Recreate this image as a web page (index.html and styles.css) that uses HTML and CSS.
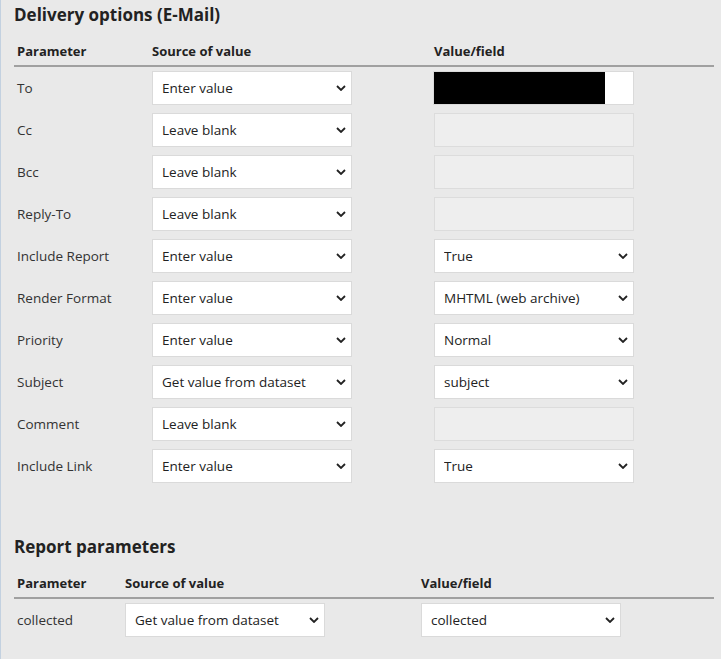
FILE: index.html
```html
<!DOCTYPE html>
<html lang="en">
<head>
  <meta charset="UTF-8">
  <title>Subscription - Delivery options</title>
  <link rel="stylesheet" href="styles.css">
</head>
<body>
<div class="page">

  <!-- Delivery options -->
  <section class="block">
    <h2 class="block-title">Delivery options (E-Mail)</h2>
    <table class="param-table">
      <colgroup>
        <col class="d-name"><col class="d-source"><col class="d-value">
      </colgroup>
      <thead>
        <tr><th>Parameter</th><th>Source of value</th><th>Value/field</th></tr>
      </thead>
      <tbody>
        <tr>
          <td>To</td>
          <td><select class="field"><option>Enter value</option><option>Leave blank</option><option>Get value from dataset</option></select></td>
          <td><div class="field masked"><span class="redact"></span></div></td>
        </tr>
        <tr>
          <td>Cc</td>
          <td><select class="field"><option>Leave blank</option><option>Enter value</option></select></td>
          <td><input class="field" type="text" disabled></td>
        </tr>
        <tr>
          <td>Bcc</td>
          <td><select class="field"><option>Leave blank</option><option>Enter value</option></select></td>
          <td><input class="field" type="text" disabled></td>
        </tr>
        <tr>
          <td>Reply-To</td>
          <td><select class="field"><option>Leave blank</option><option>Enter value</option></select></td>
          <td><input class="field" type="text" disabled></td>
        </tr>
        <tr>
          <td>Include Report</td>
          <td><select class="field"><option>Enter value</option><option>Leave blank</option></select></td>
          <td><select class="field"><option>True</option><option>False</option></select></td>
        </tr>
        <tr>
          <td>Render Format</td>
          <td><select class="field"><option>Enter value</option><option>Leave blank</option></select></td>
          <td><select class="field"><option>MHTML (web archive)</option><option>PDF</option><option>Excel</option></select></td>
        </tr>
        <tr>
          <td>Priority</td>
          <td><select class="field"><option>Enter value</option><option>Leave blank</option></select></td>
          <td><select class="field"><option>Normal</option><option>High</option><option>Low</option></select></td>
        </tr>
        <tr>
          <td>Subject</td>
          <td><select class="field"><option>Get value from dataset</option><option>Enter value</option></select></td>
          <td><select class="field"><option>subject</option><option>collected</option></select></td>
        </tr>
        <tr>
          <td>Comment</td>
          <td><select class="field"><option>Leave blank</option><option>Enter value</option></select></td>
          <td><input class="field" type="text" disabled></td>
        </tr>
        <tr>
          <td>Include Link</td>
          <td><select class="field"><option>Enter value</option><option>Leave blank</option></select></td>
          <td><select class="field"><option>True</option><option>False</option></select></td>
        </tr>
      </tbody>
    </table>
  </section>

  <!-- Report parameters -->
  <section class="block">
    <h2 class="block-title">Report parameters</h2>
    <table class="param-table">
      <colgroup>
        <col class="r-name"><col class="r-source"><col class="r-value">
      </colgroup>
      <thead>
        <tr><th>Parameter</th><th>Source of value</th><th>Value/field</th></tr>
      </thead>
      <tbody>
        <tr>
          <td>collected</td>
          <td><select class="field"><option>Get value from dataset</option><option>Enter value</option></select></td>
          <td><select class="field"><option>collected</option><option>subject</option></select></td>
        </tr>
      </tbody>
    </table>
  </section>

</div>
</body>
</html>
```

FILE: styles.css
```css
html, body {
  margin: 0;
  height: 100%;
}
body {
  background-color: #e9e9e9;
  font-family: "Open Sans", "Noto Sans", Arial, sans-serif;
  color: #262626;
}
.page {
  min-height: 100%;
  box-sizing: border-box;
  border-left: 1px solid #c3d1e0;
  padding: 3px 8px 0 13px;
}
.block + .block {
  margin-top: 48px;
}
.block-title {
  margin: 0;
  font-size: 17px;
  line-height: 24px;
  font-weight: bold;
  color: #222;
}
.param-table {
  width: 700px;
  table-layout: fixed;
  border-collapse: collapse;
  margin-top: 10px;
}
.d-name { width: 135px; }
.d-source { width: 282px; }
.d-value { width: 283px; }
.r-name { width: 108px; }
.r-source { width: 296px; }
.r-value { width: 296px; }

.param-table th {
  text-align: left;
  font-size: 13px;
  line-height: 16px;
  padding: 6px 3px;
  border-bottom: 2px solid #a0a0a0;
  color: #222;
}
.param-table td {
  padding: 4px 3px;
  font-size: 13.5px;
  vertical-align: middle;
  color: #333;
}
.field {
  display: block;
  box-sizing: border-box;
  width: 200px;
  height: 34px;
  margin: 0;
  border: 1px solid #dadada;
  border-radius: 0;
  background-color: #fff;
  font-family: inherit;
  font-size: 13.5px;
  color: #222;
  padding: 0 24px 0 9px;
  outline: none;
}
select.field {
  appearance: none;
  -webkit-appearance: none;
  background-image: url("data:image/svg+xml,%3Csvg xmlns='http://www.w3.org/2000/svg' width='10' height='6' viewBox='0 0 10 6'%3E%3Cpath d='M1 1l4 4 4-4' fill='none' stroke='%23222' stroke-width='1.8'/%3E%3C/svg%3E");
  background-repeat: no-repeat;
  background-position: right 5px center;
}
input.field:disabled {
  background-color: #eeeeee;
  border-color: #dcdcdc;
}
.masked {
  display: flex;
  width: 201px;
  margin-left: -1px;
  padding: 0;
  overflow: hidden;
}
.redact {
  display: block;
  width: 171px;
  height: 100%;
  background: #000;
}
```
